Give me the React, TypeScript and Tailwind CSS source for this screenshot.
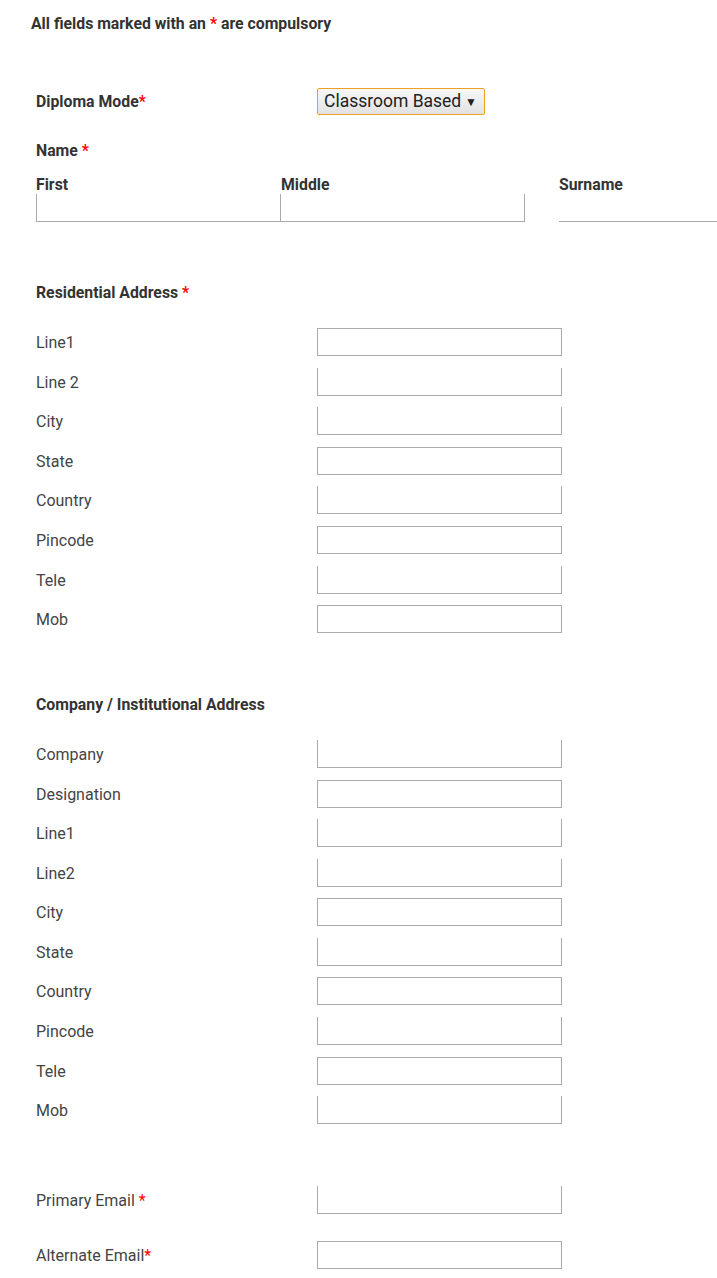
import React from 'react';

interface Field {
  label: string;
  required?: boolean;
  // some boxes render without their top edge
  open?: boolean;
}

const residential: Field[] = [
  { label: 'Line1' },
  { label: 'Line 2', open: true },
  { label: 'City', open: true },
  { label: 'State' },
  { label: 'Country', open: true },
  { label: 'Pincode' },
  { label: 'Tele', open: true },
  { label: 'Mob' },
];

const company: Field[] = [
  { label: 'Company', open: true },
  { label: 'Designation' },
  { label: 'Line1', open: true },
  { label: 'Line2', open: true },
  { label: 'City' },
  { label: 'State', open: true },
  { label: 'Country' },
  { label: 'Pincode', open: true },
  { label: 'Tele' },
  { label: 'Mob', open: true },
];

const Star = () => <span className="text-[#ff0000]">*</span>;

const Row: React.FC<{ field: Field }> = ({ field }) => (
  <div className="flex h-[28px] items-center">
    <label className="mt-[2px] w-[281px] shrink-0 text-[16px] text-[#444]">
      {field.label}
      {field.required && <> <Star /></>}
    </label>
    <input
      type="text"
      className={`h-[28px] w-[245px] border border-[#aaaaaa] bg-white outline-none ${field.open ? 'border-t-0' : ''}`}
    />
  </div>
);

const App: React.FC = () => {
  return (
    <div
      className="min-h-[1278px] w-full overflow-hidden bg-white pb-[9px]"
      style={{ fontFamily: 'Roboto, "Liberation Sans", sans-serif' }}
    >
      <p className="pl-[31px] pt-[13px] text-[15.8px] font-bold leading-[22px] text-[#333]">
        All fields marked with an <Star /> are compulsory
      </p>

      <form className="pl-[36px]">
        {/* Diploma mode */}
        <div className="mt-[53px] flex h-[27px] items-center">
          <span className="w-[281px] shrink-0 text-[15.8px] font-bold text-[#333]">
            Diploma Mode<Star />
          </span>
          <div className="flex h-[27px] w-[168px] items-center justify-between rounded-[2px] border border-[#f0a020] bg-gradient-to-b from-[#f8f8f8] to-[#e2e2e2] pl-[6px] pr-[7px] text-[17.5px] text-[#222]">
            <span>Classroom Based</span>
            <span className="text-[12px]">▼</span>
          </div>
        </div>

        {/* Name */}
        <div className="mt-[26px] text-[15.8px] font-bold leading-[20px] text-[#333]">
          Name <Star />
        </div>
        <div className="mt-[13px] flex w-[760px]">
          <div className="w-[244px] shrink-0">
            <div className="pt-[1px] text-[15.8px] font-bold leading-[19px] text-[#333]">First</div>
            <input type="text" className="block h-[28px] w-full border-b border-l border-[#aaaaaa] outline-none" />
          </div>
          <div className="w-[245px] shrink-0">
            <div className="pl-[1px] pt-[1px] text-[15.8px] font-bold leading-[19px] text-[#333]">Middle</div>
            <input type="text" className="block h-[28px] w-full border-x border-b border-[#aaaaaa] outline-none" />
          </div>
          <div className="ml-[34px] w-[245px] shrink-0">
            <div className="pt-[1px] text-[15.8px] font-bold leading-[19px] text-[#333]">Surname</div>
            <input type="text" className="block h-[28px] w-full border-b border-[#aaaaaa] outline-none" />
          </div>
        </div>

        {/* Residential address */}
        <div className="mt-[61px] text-[15.8px] font-bold leading-[20px] text-[#333]">
          Residential Address <Star />
        </div>
        <div className="mt-[25px] flex flex-col gap-[11.6px]">
          {residential.map((f) => (
            <Row key={f.label} field={f} />
          ))}
        </div>

        {/* Company address */}
        <div className="mt-[62px] text-[15.8px] font-bold leading-[20px] text-[#333]">
          Company / Institutional Address
        </div>
        <div className="mt-[25px] flex flex-col gap-[11.55px]">
          {company.map((f) => (
            <Row key={f.label} field={f} />
          ))}
        </div>

        {/* Emails */}
        <div className="mt-[62px] flex flex-col gap-[27px]">
          <div className="flex h-[28px] items-center">
            <label className="mt-[1px] w-[281px] shrink-0 text-[16px] text-[#444]">
              Primary Email <Star />
            </label>
            <input type="email" className="h-[28px] w-[245px] border border-t-0 border-[#aaaaaa] outline-none" />
          </div>
          <div className="flex h-[28px] items-center">
            <label className="mt-[1px] w-[281px] shrink-0 text-[16px] text-[#444]">
              Alternate Email<Star />
            </label>
            <input type="email" className="h-[28px] w-[245px] border border-[#aaaaaa] outline-none" />
          </div>
        </div>
      </form>
    </div>
  );
};

export default App;
